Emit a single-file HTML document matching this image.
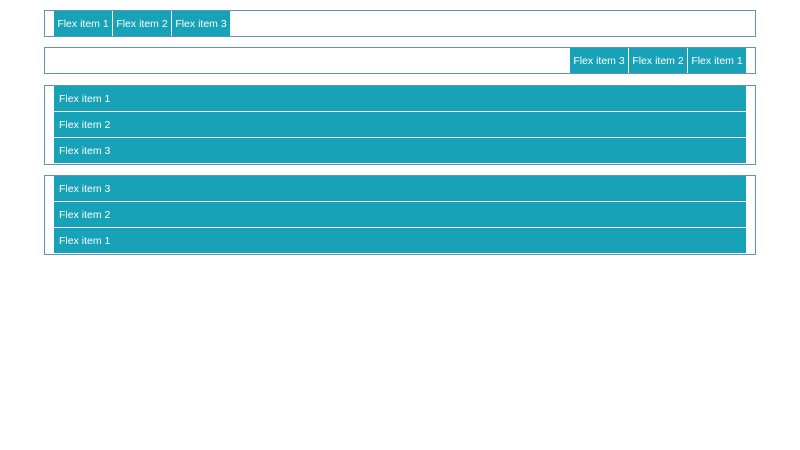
<!DOCTYPE html>
<html><head><style>
body{margin:0;background:#fff;font-family:"Liberation Sans",sans-serif;}
.box{position:absolute;left:44px;width:712px;border:1px solid #5f93b8;padding:0 9px 0 9px;box-sizing:border-box;display:flex;}
.row{height:27px;}
.rr{justify-content:flex-start;flex-direction:row-reverse;}
.col{flex-direction:column;}
.it{background:#17a2b8;color:#fff;font-size:10.5px;box-sizing:border-box;}
.row .it{width:58px;height:25px;line-height:27px;text-align:center;margin-right:1px;}
.rr .it{margin-right:0;margin-left:1px;}
.col .it{height:25px;line-height:27px;padding-left:5px;margin-bottom:1px;}
.col .it:last-child{margin-bottom:0}
</style></head><body>
<div class="box row" style="top:10px"><div class="it">Flex item 1</div><div class="it">Flex item 2</div><div class="it">Flex item 3</div></div>
<div class="box row rr" style="top:47px"><div class="it">Flex item 1</div><div class="it">Flex item 2</div><div class="it">Flex item 3</div></div>
<div class="box col" style="top:85px;height:80px"><div class="it">Flex item 1</div><div class="it">Flex item 2</div><div class="it">Flex item 3</div></div>
<div class="box col" style="top:175px;height:80px"><div class="it">Flex item 3</div><div class="it">Flex item 2</div><div class="it">Flex item 1</div></div>
</body></html>
